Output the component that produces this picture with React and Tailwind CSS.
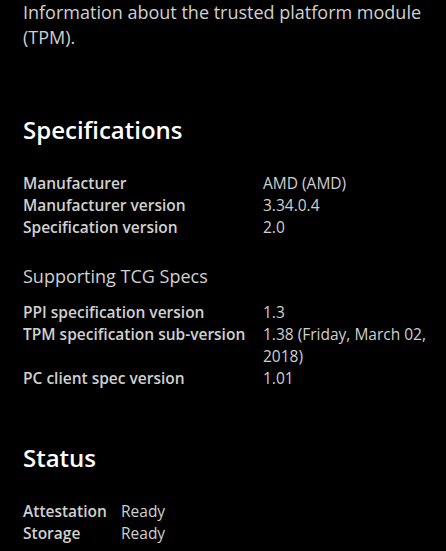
import React from "react";

const specs = [
  { label: "Manufacturer", value: "AMD (AMD)" },
  { label: "Manufacturer version", value: "3.34.0.4" },
  { label: "Specification version", value: "2.0" },
];

const tcgSpecs = [
  { label: "PPI specification version", value: "1.3" },
  { label: "TPM specification sub-version", value: "1.38 (Friday, March 02, 2018)" },
  { label: "PC client spec version", value: "1.01" },
];

const status = [
  { label: "Attestation", value: "Ready" },
  { label: "Storage", value: "Ready" },
];

// label / value rows
const InfoTable = ({ rows, cols }) => (
  <div className={`grid ${cols} text-[15.5px] leading-[22px] text-[#d0d0d0]`}>
    {rows.map((row, i) => (
      <React.Fragment key={i}>
        <div className="font-semibold">{row.label}</div>
        <div>{row.value}</div>
      </React.Fragment>
    ))}
  </div>
);

const App = () => {
  return (
    <div className="min-h-[551px] bg-black pl-[23px] pr-[16px] font-['Segoe_UI','Open_Sans',sans-serif] text-[#d0d0d0]">
      <p className="text-[18px] leading-[25px]">
        Information about the trusted platform module (TPM).
      </p>

      {/* Specifications */}
      <h2 className="mt-[64px] text-[24px] leading-[32px] font-semibold text-white">
        Specifications
      </h2>
      <div className="mt-[26px]">
        <InfoTable rows={specs} cols="grid-cols-[240px_1fr]" />
      </div>

      <h3 className="mt-[26px] text-[18px] leading-[25px]">Supporting TCG Specs</h3>
      <div className="mt-[12px]">
        <InfoTable rows={tcgSpecs} cols="grid-cols-[240px_1fr]" />
      </div>

      {/* Status */}
      <h2 className="mt-[53px] text-[24px] leading-[32px] font-semibold text-white">
        Status
      </h2>
      <div className="mt-[26px]">
        <InfoTable rows={status} cols="grid-cols-[98px_1fr]" />
      </div>
    </div>
  );
};

export default App;
